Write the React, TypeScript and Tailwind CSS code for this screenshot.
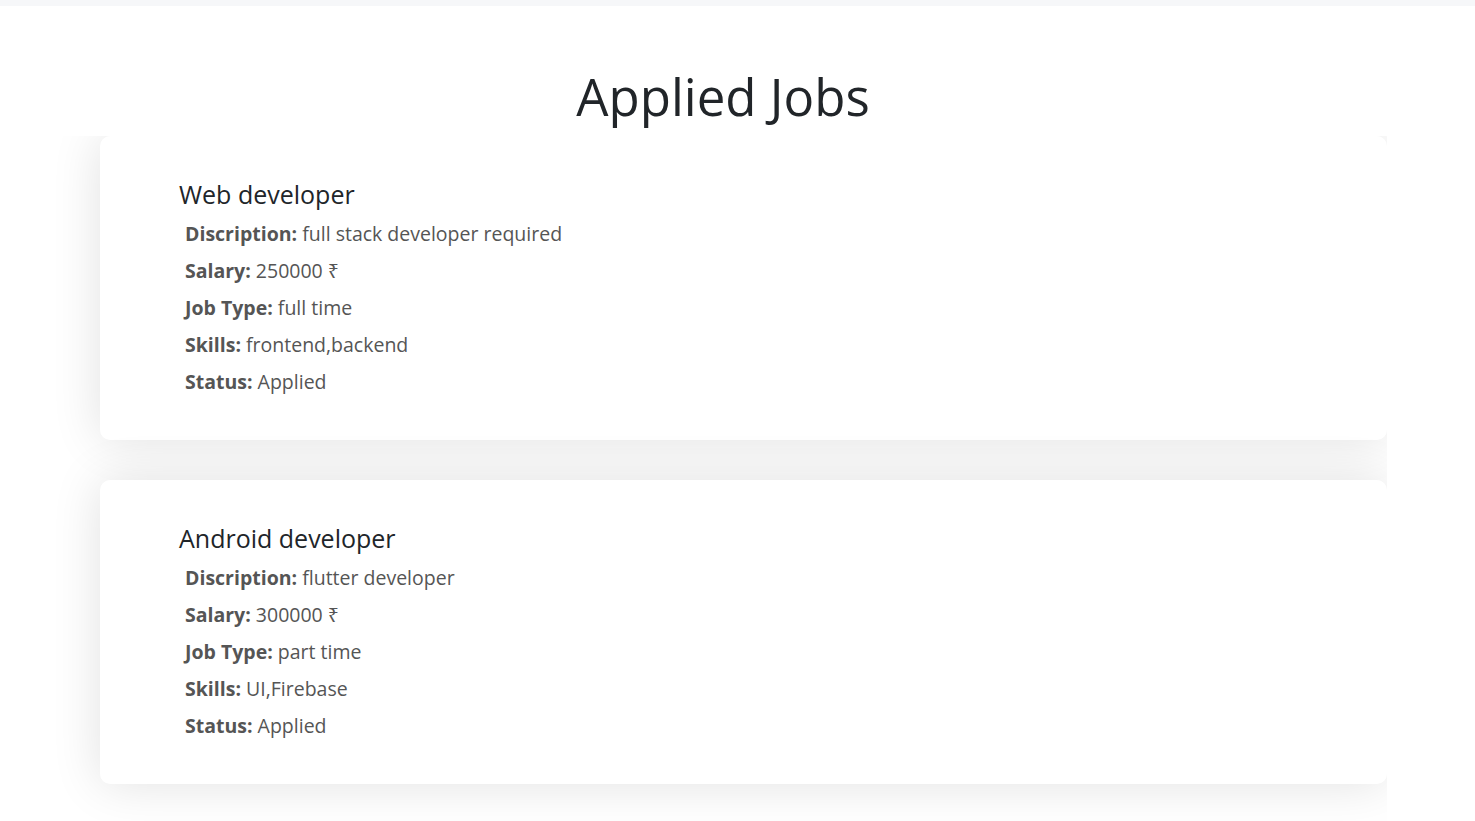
import React from "react";

type Job = {
  title: string;
  description: string;
  salary: string;
  type: string;
  skills: string;
  status: string;
};

const jobs: Job[] = [
  {
    title: "Web developer",
    description: "full stack developer required",
    salary: "250000 ₹",
    type: "full time",
    skills: "frontend,backend",
    status: "Applied",
  },
  {
    title: "Android developer",
    description: "flutter developer",
    salary: "300000 ₹",
    type: "part time",
    skills: "UI,Firebase",
    status: "Applied",
  },
];

function Row({ label, value }: { label: string; value: string }) {
  return (
    <p className="m-0 pl-[6px] text-[19.5px] leading-[37px] text-[#555555]">
      <span className="font-bold">{label}:</span> {value}
    </p>
  );
}

export default function App() {
  return (
    <div className="min-h-screen bg-white font-['Open_Sans','Noto_Sans',sans-serif]">
      <div className="h-[6px] bg-[#f6f7f9]" />
      <h1 className="mt-[56px] mb-[6px] pr-[29px] text-center text-[51px] font-normal leading-[68px] text-[#212529]">
        Applied Jobs
      </h1>
      <div className="mr-[88px] overflow-hidden pl-[100px] pb-[80px]">
        <div className="flex flex-col gap-10">
          {jobs.map((job, i) => (
            <div
              key={i}
              className="rounded-[10px] bg-white pt-[42px] pb-[40px] pl-[79px] shadow-[0_0_50px_rgba(0,0,0,0.12)]"
            >
              <h4 className="m-0 text-[25px] font-normal leading-[33px] text-[#212529]">
                {job.title}
              </h4>
              <div className="mt-[4px]">
                <Row label="Discription" value={job.description} />
                <Row label="Salary" value={job.salary} />
                <Row label="Job Type" value={job.type} />
                <Row label="Skills" value={job.skills} />
                <Row label="Status" value={job.status} />
              </div>
            </div>
          ))}
        </div>
      </div>
    </div>
  );
}
